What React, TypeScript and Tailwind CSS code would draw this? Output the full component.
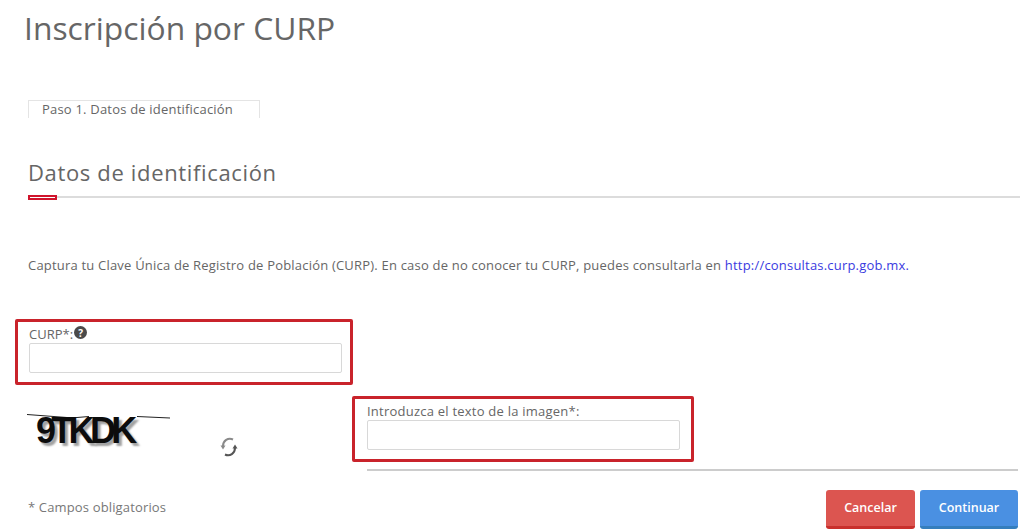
const font = { fontFamily: '"Open Sans", sans-serif' }

function RefreshIcon() {
  return (
    <svg className="w-[18px] h-[20px]" viewBox="0 0 18 20" fill="none">
      <path d="M13 2.5C8 0 3 4 3 9" stroke="#8a8a8a" strokeWidth="2" />
      <path d="M5 17.5C10 20 15 16 15 11" stroke="#555" strokeWidth="2" />
      <path d="M0.5 8.5h5L3 12.5z" fill="#8a8a8a" />
      <path d="M12.5 11.5h5L15 7.5z" fill="#555" />
    </svg>
  )
}

function Captcha() {
  return (
    <div className="relative w-[143px] h-[36px]">
      <svg className="absolute left-0 top-0 w-[143px] h-[10px]" viewBox="0 0 143 10" fill="none">
        <path d="M0 1.5L40 4.5M44 5L62 3.5M110 3.5L143 5" stroke="#222" strokeWidth="1" />
      </svg>
      <span className="absolute left-[9px] top-[-4px] text-[36px] leading-[44px] font-bold text-[#0c0c0c] tracking-[-4.7px] [font-family:'Liberation_Sans',sans-serif] [text-shadow:3px_3px_2px_#a0a0a0]">
        9TKDK
      </span>
    </div>
  )
}

export default function App() {
  return (
    <div className="w-[1024px] h-[532px] overflow-hidden bg-white text-[#666]" style={font}>
      <h1 className="ml-6 pt-[7px] text-[31.8px] leading-[42px] text-[#666] font-normal">Inscripción por CURP</h1>

      <div className="ml-7 mt-[51px] w-[232px] h-[18px] border-x border-t border-[#e4e4e4] pl-[13px] text-[13px] leading-[17px] tracking-[0.2px]">
        Paso 1. Datos de identificación
      </div>

      <div className="relative ml-7 mr-1 mt-[38px] h-[42px] border-b-2 border-[#dcdcdc]">
        <h2 className="text-[22px] leading-[32px] tracking-[0.65px] text-[#666] font-normal">Datos de identificación</h2>
        <div className="absolute left-0 bottom-[-4px] w-[29px] h-[5px] border-2 border-[#d0142c] bg-white" />
      </div>

      <p className="ml-7 mt-[57px] text-[13px] leading-[20px] tracking-[0.2px] whitespace-nowrap">
        Captura tu Clave Única de Registro de Población (CURP). En caso de no conocer tu CURP, puedes consultarla en{' '}
        <span className="text-[#3a3adf]">http://consultas.curp.gob.mx.</span>
      </p>

      <div className="ml-[15px] mt-[44px] w-[338px] h-[66px] border-[3px] border-[#c9232b] rounded-[2px] pl-[11px] pt-[3px]">
        <div className="flex items-center gap-[1px] h-[18px] text-[13px] leading-[18px]">
          CURP*:
          <span className="flex items-center justify-center w-[13px] h-[13px] mb-[3px] rounded-full bg-[#4a4a4a] text-white text-[10px] leading-none font-bold">?</span>
        </div>
        <div className="w-[313px] h-[30px] border border-[#d8d8d8] rounded-[2px]" />
      </div>

      <div className="flex">
        <div className="ml-[27px] w-[325px]">
          <div className="flex mt-[28px] h-[50px]">
            <Captcha />
            <div className="ml-[50px] mt-[24px]"><RefreshIcon /></div>
          </div>
          <div className="ml-[1px] mt-[35px] text-[13px] leading-[18px] tracking-[0.15px] text-[#777]">* Campos obligatorios</div>
        </div>

        <div className="flex-1 mt-[11px]">
          <div className="w-[342px] h-[66px] border-[3px] border-[#c9232b] rounded-[2px] pl-3 pt-[3px]">
            <div className="text-[13px] leading-[18px] tracking-[0.23px] whitespace-nowrap">Introduzca el texto de la imagen*:</div>
            <div className="w-[313px] h-[30px] border border-[#d8d8d8] rounded-[2px]" />
          </div>
          <div className="ml-[15px] mr-[6px] mt-[7px] border-t-2 border-[#cccccc]" />
          <div className="flex justify-end gap-[5px] mr-[6px] mt-[19px]">
            <button className="w-[89px] h-[39px] rounded-[3px] bg-[#dc5550] border-b-[3px] border-[#c9302c] text-white text-[12.5px] font-semibold">Cancelar</button>
            <button className="w-[98px] h-[39px] rounded-[3px] bg-[#4a90e2] border-b-[3px] border-[#357ebd] text-white text-[12.5px] font-semibold">Continuar</button>
          </div>
        </div>
      </div>
    </div>
  )
}
